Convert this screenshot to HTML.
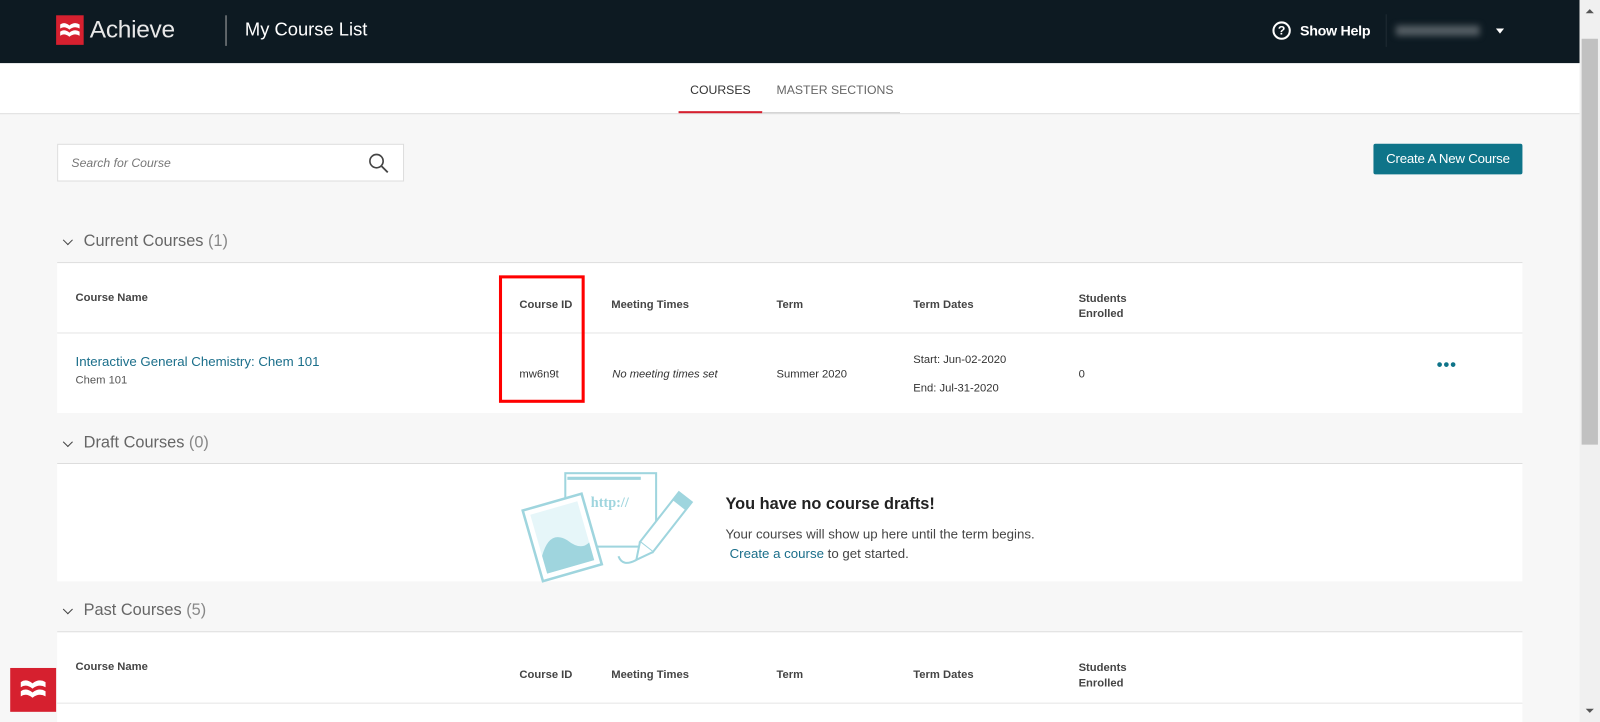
<!DOCTYPE html>
<html><head><meta charset="utf-8">
<style>
*{margin:0;padding:0;box-sizing:border-box}
html,body{width:1600px;height:722px;overflow:hidden;background:#f7f7f7;font-family:"Liberation Sans",sans-serif}
#w{position:absolute;left:0;top:0;width:1568px;height:708px;transform:scale(1.0204,1.0198);transform-origin:0 0;background:#f7f7f7}
.a{position:absolute;white-space:nowrap}
.hd{font-size:11px;font-weight:bold;color:#444}
.c{font-size:11px;color:#333}
.sec{font-size:16px;color:#666}
.chev{position:absolute;width:7px;height:7px;border-right:1.5px solid #444;border-bottom:1.5px solid #444;transform:rotate(45deg)}
</style></head><body><div id="w">
<div class="a" style="left:0;top:0;width:1548px;height:62px;background:#0d1a22"></div>
<div class="a" style="left:55px;top:15px;width:27px;height:29px;background:#d6202f"></div>
<svg class="a" style="left:58px;top:21px" width="21" height="18" viewBox="0 0 21 18"><path d="M1 3 Q5 0 10 4 Q15 0 20 3 L20 7 Q15 4 10 8 Q5 4 1 7Z M1 10 Q5 7 10 11 Q15 7 20 10 L20 14 Q15 11 10 15 Q5 11 1 14Z" fill="#fff"/></svg>
<div class="a" style="left:88px;top:16px;font-size:24px;color:#e8e8e8;letter-spacing:-0.3px">Achieve</div>
<div class="a" style="left:221px;top:15px;width:1px;height:30px;background:#aaa"></div>
<div class="a" style="left:240px;top:19px;font-size:18px;color:#fff">My Course List</div>
<div class="a" style="left:1247px;top:21px;width:18px;height:18px;border:2px solid #fff;border-radius:50%;color:#fff;font-size:12px;font-weight:bold;text-align:center;line-height:14px">?</div>
<div class="a" style="left:1274px;top:22px;font-size:14px;font-weight:bold;color:#fff;letter-spacing:-0.3px">Show Help</div>
<div class="a" style="left:1358px;top:14px;width:1px;height:32px;background:#1f2c34"></div>
<div class="a" style="left:1368px;top:25px;width:82px;height:10px;background:#555e64;filter:blur(3px)"></div>
<div class="a" style="left:1466px;top:28px;border-left:4px solid transparent;border-right:4px solid transparent;border-top:5px solid #fff"></div>
<div class="a" style="left:0;top:62px;width:1548px;height:50px;background:#fff;border-bottom:1px solid #ddd"></div>
<div class="a" style="left:665px;top:81px;width:82px;text-align:center;font-size:12px;color:#333">COURSES</div>
<div class="a" style="left:665px;top:109px;width:82px;height:2px;background:#d6202f"></div>
<div class="a" style="left:747px;top:110px;width:135px;height:1px;background:#ccc"></div>
<div class="a" style="left:761px;top:81px;font-size:12px;color:#666">MASTER SECTIONS</div>
<div class="a" style="left:56px;top:141px;width:340px;height:37px;background:#fff;border:1px solid #ddd"></div>
<div class="a" style="left:70px;top:153px;font-size:12px;font-style:italic;color:#777">Search for Course</div>
<svg class="a" style="left:361px;top:150px" width="20" height="20"><circle cx="8" cy="8" r="6.5" stroke="#444" stroke-width="1.6" fill="none"/><path d="M13 13 L19 19" stroke="#444" stroke-width="1.8"/></svg>
<div class="a" style="left:1346px;top:141px;width:146px;height:30px;background:#0e7489;border-radius:2px;color:#fff;font-size:13px;text-align:center;line-height:30px;letter-spacing:-0.2px">Create A New Course</div>
<div class="chev" style="left:63px;top:232px"></div>
<div class="a sec" style="left:82px;top:228px">Current Courses <span style="color:#888">(1)</span></div>
<div class="a" style="left:56px;top:257px;width:1436px;height:148px;background:#fff;border-top:1px solid #ddd"></div>
<div class="a" style="left:56px;top:326px;width:1436px;height:1px;background:#e5e5e5"></div>
<div class="a hd" style="left:74px;top:286px">Course Name</div>
<div class="a hd" style="left:509px;top:293px">Course ID</div>
<div class="a hd" style="left:599px;top:293px">Meeting Times</div>
<div class="a hd" style="left:761px;top:293px">Term</div>
<div class="a hd" style="left:895px;top:293px">Term Dates</div>
<div class="a hd" style="left:1057px;top:286px;line-height:15px">Students<br>Enrolled</div>
<div class="a" style="left:74px;top:347px;font-size:13px;color:#1a6e8a">Interactive General Chemistry: Chem 101</div>
<div class="a c" style="left:74px;top:367px;color:#555">Chem 101</div>
<div class="a c" style="left:509px;top:361px">mw6n9t</div>
<div class="a c" style="left:600px;top:361px;font-style:italic">No meeting times set</div>
<div class="a c" style="left:761px;top:361px">Summer 2020</div>
<div class="a c" style="left:895px;top:347px">Start: Jun-02-2020</div>
<div class="a c" style="left:895px;top:375px">End: Jul-31-2020</div>
<div class="a c" style="left:1057px;top:361px">0</div>
<div class="a" style="left:1408px;top:350px;font-size:16px;font-weight:bold;color:#0e7489;letter-spacing:1px">•••</div>
<div class="a" style="left:489px;top:270px;width:84px;height:125px;border:3px solid #f00"></div>
<div class="chev" style="left:63px;top:430px"></div>
<div class="a sec" style="left:82px;top:426px">Draft Courses <span style="color:#888">(0)</span></div>
<div class="a" style="left:56px;top:454px;width:1436px;height:116px;background:#fff;border-top:1px solid #ddd"></div>
<svg class="a" style="left:510px;top:460px" width="170" height="112" viewBox="0 0 170 112">
<rect x="44" y="4" width="89" height="72" fill="#fff" stroke="#9fd5de" stroke-width="2"/>
<line x1="46" y1="9" x2="118" y2="9" stroke="#9fd5de" stroke-width="3"/>
<text x="69" y="37" font-family="Liberation Serif,serif" font-size="14" font-weight="bold" fill="#9fd5de">http://</text>
<g transform="rotate(-16 45 70)"><rect x="12" y="30" width="60" height="72" fill="#fff" stroke="#9fd5de" stroke-width="2.5"/><rect x="18" y="36" width="48" height="60" fill="#e6f6f9"/><path d="M18 96 L18 78 Q32 55 46 70 Q56 84 66 78 L66 96Z" fill="#9fd5de"/></g>
<g transform="rotate(38 135 60)"><rect x="128" y="18" width="16" height="62" fill="#fff" stroke="#9fd5de" stroke-width="2"/><rect x="128" y="18" width="16" height="10" fill="#9fd5de"/><path d="M128 80 L136 96 L144 80" fill="#fff" stroke="#9fd5de" stroke-width="2"/><path d="M136 96 Q130 110 120 104" fill="none" stroke="#9fd5de" stroke-width="2"/></g>
</svg>
<div class="a" style="left:711px;top:486px;font-size:16px;font-weight:bold;color:#222">You have no course drafts!</div>
<div class="a" style="left:711px;top:516px;font-size:13px;color:#444">Your courses will show up here until the term begins.</div>
<div class="a" style="left:715px;top:535px;font-size:13px;color:#444"><span style="color:#1a6e8a">Create a course</span> to get started.</div>
<div class="chev" style="left:63px;top:594px"></div>
<div class="a sec" style="left:82px;top:590px">Past Courses <span style="color:#888">(5)</span></div>
<div class="a" style="left:56px;top:619px;width:1436px;height:89px;background:#fff;border-top:1px solid #ddd"></div>
<div class="a" style="left:56px;top:689px;width:1436px;height:1px;background:#e5e5e5"></div>
<div class="a hd" style="left:74px;top:648px">Course Name</div>
<div class="a hd" style="left:509px;top:656px">Course ID</div>
<div class="a hd" style="left:599px;top:656px">Meeting Times</div>
<div class="a hd" style="left:761px;top:656px">Term</div>
<div class="a hd" style="left:895px;top:656px">Term Dates</div>
<div class="a hd" style="left:1057px;top:648px;line-height:15px">Students<br>Enrolled</div>
<div class="a" style="left:10px;top:655px;width:45px;height:43px;background:#d6202f"></div>
<svg class="a" style="left:19px;top:665px" width="27" height="23" viewBox="0 0 21 18"><path d="M1 3 Q5 0 10 4 Q15 0 20 3 L20 7 Q15 4 10 8 Q5 4 1 7Z M1 10 Q5 7 10 11 Q15 7 20 10 L20 14 Q15 11 10 15 Q5 11 1 14Z" fill="#fff"/></svg>
<div class="a" style="left:1548px;top:0;width:20px;height:708px;background:#f0f0f0"></div>
<div class="a" style="left:1550px;top:38px;width:16px;height:398px;background:#c1c1c1"></div>
<div class="a" style="left:1554px;top:9px;border-left:4px solid transparent;border-right:4px solid transparent;border-bottom:4px solid #555"></div>
<div class="a" style="left:1554px;top:695px;border-left:4px solid transparent;border-right:4px solid transparent;border-top:4px solid #555"></div>
</div></body></html>
